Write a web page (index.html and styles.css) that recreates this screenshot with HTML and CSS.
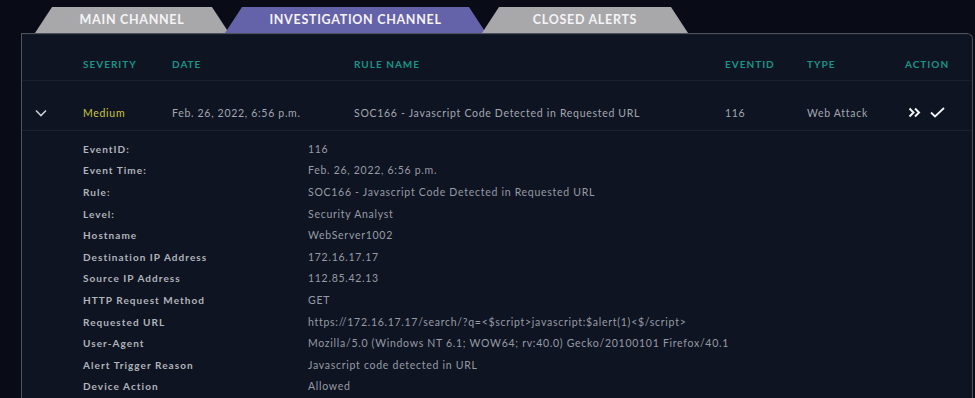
FILE: index.html
```html
<!DOCTYPE html>
<html lang="en">
	<head>
		<title>Monitoring - Investigation Channel</title>
		<meta charset="utf-8">
		<link rel="stylesheet" href="styles.css">
	</head>

	<body>
		<div class="tabs">
			<div class="tab tab-main">MAIN CHANNEL</div>
			<div class="tab tab-active">INVESTIGATION CHANNEL</div>
			<div class="tab tab-closed">CLOSED ALERTS</div>
		</div>

		<div class="panel">
			<div class="grid head">
				<div></div>
				<div>SEVERITY</div>
				<div>DATE</div>
				<div>RULE NAME</div>
				<div>EVENTID</div>
				<div>TYPE</div>
				<div>ACTION</div>
			</div>

			<div class="grid alert">
				<div class="toggle">
					<svg width="12" height="8" viewBox="0 0 12 8"><path d="M1 1.5 L6 6.5 L11 1.5" fill="none" stroke="#c9ccd3" stroke-width="1.6"/></svg>
				</div>
				<div class="sev">Medium</div>
				<div>Feb. 26, 2022, 6:56 p.m.</div>
				<div>SOC166 - Javascript Code Detected in Requested URL</div>
				<div>116</div>
				<div>Web Attack</div>
				<div class="actions">
					<svg width="13" height="11" viewBox="0 0 13 11"><path d="M1.5 1.5 L5.5 5.5 L1.5 9.5 M7 1.5 L11 5.5 L7 9.5" fill="none" stroke="#f2f3f5" stroke-width="2"/></svg>
					<svg width="15" height="11" viewBox="0 0 15 11"><path d="M1 5.5 L5 9.5 L14 1" fill="none" stroke="#f2f3f5" stroke-width="1.8"/></svg>
				</div>
			</div>

			<div class="details">
				<div class="row"><div class="label">EventID:</div><div class="value">116</div></div>
				<div class="row"><div class="label">Event Time:</div><div class="value">Feb. 26, 2022, 6:56 p.m.</div></div>
				<div class="row"><div class="label">Rule:</div><div class="value">SOC166 - Javascript Code Detected in Requested URL</div></div>
				<div class="row"><div class="label">Level:</div><div class="value">Security Analyst</div></div>
				<div class="row"><div class="label">Hostname</div><div class="value">WebServer1002</div></div>
				<div class="row"><div class="label">Destination IP Address</div><div class="value">172.16.17.17</div></div>
				<div class="row"><div class="label">Source IP Address</div><div class="value">112.85.42.13</div></div>
				<div class="row"><div class="label">HTTP Request Method</div><div class="value">GET</div></div>
				<div class="row"><div class="label">Requested URL</div><div class="value">https://172.16.17.17/search/?q=&lt;$script&gt;javascript:$alert(1)&lt;$/script&gt;</div></div>
				<div class="row"><div class="label">User-Agent</div><div class="value">Mozilla/5.0 (Windows NT 6.1; WOW64; rv:40.0) Gecko/20100101 Firefox/40.1</div></div>
				<div class="row"><div class="label">Alert Trigger Reason</div><div class="value">Javascript code detected in URL</div></div>
				<div class="row"><div class="label">Device Action</div><div class="value">Allowed</div></div>
			</div>
		</div>
	</body>
</html>
```

FILE: styles.css
```css
body {
	margin: 0;
	height: 100vh;
	background: #090b16;
	font-family: Lato, "Noto Sans", sans-serif;
	overflow: hidden;
	display: flex;
	flex-direction: column;
}

.tabs {
	display: flex;
	flex: none;
	height: 26px;
	margin-top: 7px;
	padding-left: 35px;
}

.tab {
	height: 26px;
	line-height: 26px;
	color: #f4f4f6;
	font-size: 12.5px;
	font-weight: bold;
	letter-spacing: 0.7px;
	text-align: center;
	box-sizing: border-box;
	padding-bottom: 3px;
	clip-path: polygon(17px 0, calc(100% - 17px) 0, 100% 100%, 0 100%);
}

.tab-main {
	width: 194px;
	background: #a8a8aa;
}

.tab-active {
	width: 261px;
	margin-left: -4px;
	background: #6462a9;
}

.tab-closed {
	width: 206px;
	margin-left: -4px;
	background: #a8a8aa;
}

.panel {
	flex: 1;
	overflow: hidden;
	margin-left: 21px;
	width: 950px;
	background: #0e1422;
	border: 1.5px solid #4d525d;
	border-bottom: none;
	border-radius: 0 6px 0 0;
}

.grid {
	display: grid;
	grid-template-columns: 61px 89px 182px 371px 82px 98px 1fr;
	align-items: center;
}

.head {
	height: 47px;
	border-top: 1px solid #151c2a;
	border-bottom: 1px solid #182030;
	color: #1a9486;
	font-size: 10px;
	font-weight: bold;
	letter-spacing: 1px;
	box-sizing: border-box;
	padding-top: 12px;
}

.alert {
	height: 50px;
	box-sizing: border-box;
	padding-top: 14px;
	border-bottom: 1px solid #1a2232;
	color: #a3a7b0;
	font-size: 10.5px;
	letter-spacing: 0.7px;
}

.toggle {
	padding-left: 13px;
	display: flex;
	align-items: center;
}

.sev {
	color: #cbc53c;
}

.actions {
	display: flex;
	align-items: center;
	gap: 9px;
	padding-left: 3px;
}

.details {
	padding-top: 7px;
}

.row {
	display: flex;
	height: 21.6px;
	align-items: center;
	font-size: 10px;
}

.label {
	flex: none;
	width: 225px;
	padding-left: 61px;
	color: #b1b4bb;
	font-weight: bold;
	letter-spacing: 1.05px;
}

.value {
	color: #979ba4;
	font-size: 10.5px;
	letter-spacing: 0.72px;
	white-space: nowrap;
}
```
